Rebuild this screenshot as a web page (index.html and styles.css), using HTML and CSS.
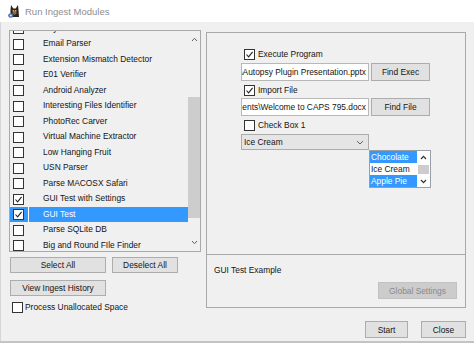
FILE: index.html
```html
<!DOCTYPE html>
<html>
<head>
<meta charset="utf-8">
<title>Run Ingest Modules</title>
<link rel="stylesheet" href="styles.css">
</head>
<body>
<div class="window">
  <div class="titlebar">
    <svg class="app-icon" viewBox="0 0 13 14" width="13" height="14">
      <path d="M2.5 13 L2.5 6 L3 1 L5.3 4.4 L7.7 4.4 L10 1 L10.5 6 L11 13 Z" fill="#2e2216"/>
      <path d="M5 6.5 L8 6.5 L8.6 9.5 L6.5 11 L4.4 9.5 Z" fill="#8a6a40"/>
      <circle cx="5.2" cy="6.8" r="0.7" fill="#e8d8b0"/>
      <circle cx="7.8" cy="6.8" r="0.7" fill="#e8d8b0"/>
      <ellipse cx="2.8" cy="11.5" rx="2.6" ry="2.2" fill="#3d6fb8"/>
      <ellipse cx="2.8" cy="11.5" rx="1.2" ry="1" fill="#cfe0f5"/>
    </svg>
    <span class="title">Run Ingest Modules</span>
  </div>
  <div class="body">
    <div class="main">
      <div class="left">
        <div class="modlist">
          <div class="rows">
            <div class="rows-inner">
              <div class="row"><span class="cbcell"><span class="cb"></span></span><span class="name">Keyword Search</span></div>
              <div class="row"><span class="cbcell"><span class="cb"></span></span><span class="name">Email Parser</span></div>
              <div class="row"><span class="cbcell"><span class="cb"></span></span><span class="name">Extension Mismatch Detector</span></div>
              <div class="row"><span class="cbcell"><span class="cb"></span></span><span class="name">E01 Verifier</span></div>
              <div class="row"><span class="cbcell"><span class="cb"></span></span><span class="name">Android Analyzer</span></div>
              <div class="row"><span class="cbcell"><span class="cb"></span></span><span class="name">Interesting Files Identifier</span></div>
              <div class="row"><span class="cbcell"><span class="cb"></span></span><span class="name">PhotoRec Carver</span></div>
              <div class="row"><span class="cbcell"><span class="cb"></span></span><span class="name">Virtual Machine Extractor</span></div>
              <div class="row"><span class="cbcell"><span class="cb"></span></span><span class="name">Low Hanging Fruit</span></div>
              <div class="row"><span class="cbcell"><span class="cb"></span></span><span class="name">USN Parser</span></div>
              <div class="row"><span class="cbcell"><span class="cb"></span></span><span class="name">Parse MACOSX Safari</span></div>
              <div class="row"><span class="cbcell"><span class="cb"><svg class="tick" viewBox="0 0 9 9"><path d="M1.5 4.5 L3.6 6.8 L7.6 1.8"/></svg></span></span><span class="name">GUI Test with Settings</span></div>
              <div class="row selected"><span class="cbcell"><span class="cb"><svg class="tick" viewBox="0 0 9 9"><path d="M1.5 4.5 L3.6 6.8 L7.6 1.8"/></svg></span></span><span class="name">GUI Test</span></div>
              <div class="row"><span class="cbcell"><span class="cb"></span></span><span class="name">Parse SQLite DB</span></div>
              <div class="row"><span class="cbcell"><span class="cb"></span></span><span class="name">Big and Round FIle Finder</span></div>
            </div>
          </div>
          <div class="vscroll">
            <span class="sarrow"><svg viewBox="0 0 7 5" width="7" height="5"><path d="M1 4 L3.5 1.3 L6 4" class="chev"/></svg></span>
            <span class="track"><span class="thumb"></span></span>
            <span class="sarrow"><svg viewBox="0 0 7 5" width="7" height="5"><path d="M1 1 L3.5 3.7 L6 1" class="chev"/></svg></span>
          </div>
        </div>
        <div class="btnrow">
          <button class="btn btn-select">Select All</button>
          <button class="btn btn-deselect">Deselect All</button>
        </div>
        <button class="btn btn-history">View Ingest History</button>
        <label class="check check-unalloc"><span class="cb"></span><span>Process Unallocated Space</span></label>
      </div>
      <div class="panel">
        <div class="settings">
          <label class="check srow first"><span class="cb"><svg class="tick" viewBox="0 0 9 9"><path d="M1.5 4.5 L3.6 6.8 L7.6 1.8"/></svg></span><span>Execute Program</span></label>
          <div class="field-row">
            <div class="field"><span>C:\Users\Student\Documents\Autopsy Plugin Presentation.pptx</span></div>
            <button class="btn btn-find">Find Exec</button>
          </div>
          <label class="check srow"><span class="cb"><svg class="tick" viewBox="0 0 9 9"><path d="M1.5 4.5 L3.6 6.8 L7.6 1.8"/></svg></span><span>Import File</span></label>
          <div class="field-row second">
            <div class="field"><span>C:\Users\Student\Documents\Welcome to CAPS 795.docx</span></div>
            <button class="btn btn-find">Find File</button>
          </div>
          <label class="check srow"><span class="cb"></span><span>Check Box 1</span></label>
          <div class="combo">
            <span>Ice Cream</span>
            <svg viewBox="0 0 8 5" width="8" height="5"><path d="M1 1 L4 4 L7 1" class="chev"/></svg>
          </div>
          <div class="listbox">
            <div class="items">
              <div class="item sel">Chocolate</div>
              <div class="item">Ice Cream</div>
              <div class="item sel">Apple Pie</div>
            </div>
            <div class="mini-scroll">
              <span class="marrow"><svg viewBox="0 0 7 5" width="7" height="5"><path d="M1 4 L3.5 1.3 L6 4" class="chev dark"/></svg></span>
              <span class="mtrack"><span class="mthumb"></span></span>
              <span class="marrow"><svg viewBox="0 0 7 5" width="7" height="5"><path d="M1 1 L3.5 3.7 L6 1" class="chev dark"/></svg></span>
            </div>
          </div>
        </div>
        <div class="desc">
          <div class="desc-text">GUI Test Example</div>
          <button class="btn btn-global" disabled>Global Settings</button>
        </div>
      </div>
    </div>
    <div class="footer">
      <button class="btn btn-start">Start</button>
      <button class="btn btn-close">Close</button>
    </div>
  </div>
</div>
</body>
</html>
```

FILE: styles.css
```css
* { box-sizing: border-box; }

html, body {
  margin: 0;
  padding: 0;
  background: #f0f0f0;
}

body {
  font-family: "Liberation Sans", Arial, sans-serif;
  font-size: 8.4px;
  color: #141414;
}

.window {
  width: 474px;
  height: 343px;
  background: #f0f0f0;
  display: flex;
  flex-direction: column;
  overflow: hidden;
  border-bottom: 2px solid #c4c4c4;
}

.titlebar {
  height: 22px;
  flex: none;
  background: #ffffff;
  display: flex;
  align-items: center;
  padding-left: 8px;
  gap: 4px;
}

.app-icon { display: block; }

.title {
  color: #8e8e8e;
  font-size: 9.5px;
}

.body {
  flex: 1;
  padding: 8px 8px 0 8px;
  border-left: 1px solid #d6d6d6;
}

.main {
  display: flex;
  gap: 5px;
  align-items: flex-start;
}

.left {
  width: 192px;
  flex: none;
  display: flex;
  flex-direction: column;
  align-items: flex-start;
}

/* module list */
.modlist {
  width: 192px;
  height: 222px;
  border: 1px solid #a9a9a9;
  background: #f0f0f0;
  display: flex;
}

.rows {
  flex: 1;
  overflow: hidden;
}

.rows-inner { margin-top: -10.25px; }

.row {
  height: 15.5px;
  display: flex;
  align-items: center;
}

.cbcell {
  width: 18px;
  height: 100%;
  flex: none;
  display: flex;
  align-items: center;
  padding-left: 3px;
}

.name {
  flex: 1;
  height: 100%;
  padding-left: 15px;
  line-height: 15.5px;
  white-space: nowrap;
  overflow: hidden;
}

.row.selected {
  background: #3399ff;
  color: #ffffff;
}

.row.selected .name { box-shadow: inset 1px 0 #ffffff; }

.cb {
  width: 11px;
  height: 11px;
  flex: none;
  border: 1px solid #333333;
  background: #ffffff;
  display: inline-flex;
  align-items: center;
  justify-content: center;
}

.tick {
  width: 9px;
  height: 9px;
  fill: none;
  stroke: #222222;
  stroke-width: 1.1;
}

.vscroll {
  width: 12px;
  flex: none;
  display: flex;
  flex-direction: column;
  background: #f0f0f0;
}

.sarrow {
  height: 17px;
  flex: none;
  display: flex;
  align-items: center;
  justify-content: center;
}

.chev {
  fill: none;
  stroke: #606060;
  stroke-width: 1;
}

.chev.dark { stroke: #333333; stroke-width: 1.2; }

.track {
  flex: 1;
  display: flex;
  flex-direction: column;
}

.thumb {
  margin-top: 49px;
  height: 121px;
  background: #cdcdcd;
}

/* buttons */
.btn {
  font: inherit;
  color: #141414;
  height: 16px;
  padding: 0;
  border: 1px solid #adadad;
  background: #e1e1e1;
  display: flex;
  align-items: center;
  justify-content: center;
  white-space: nowrap;
}

.btnrow {
  display: flex;
  gap: 6px;
  margin: 5px 0 0 1px;
}

.btn-select { width: 96px; }
.btn-deselect { width: 66px; }

.btn-history {
  width: 96px;
  margin: 7px 0 0 1px;
}

.check {
  display: flex;
  align-items: center;
  gap: 3px;
  height: 12px;
}

.check-unalloc {
  margin: 5px 0 0 3px;
  gap: 2px;
}

/* right panel */
.panel {
  width: 260px;
  height: 276px;
  margin-top: 2px;
  border: 1px solid #a9a9a9;
  display: flex;
  flex-direction: column;
}

.settings {
  height: 222px;
  flex: none;
  border-bottom: 1px solid #a9a9a9;
  padding: 0 0 0 34px;
}

.srow {
  padding-left: 3px;
  margin-top: 3px;
}

.srow.first { margin-top: 15px; }

.field-row {
  display: flex;
  gap: 2px;
  height: 18px;
  margin-top: 3px;
}

.field-row.second { margin-top: 2px; }

.field {
  width: 128px;
  height: 100%;
  background: #ffffff;
  border: 1px solid #b8b8b8;
  display: flex;
  justify-content: flex-end;
  align-items: center;
  overflow: hidden;
  white-space: nowrap;
  padding-right: 2px;
}

.field span { flex: none; }

.btn-find {
  width: 59px;
  height: 18px;
}

.combo {
  width: 128px;
  height: 16px;
  margin-top: 3px;
  background: #e5e5e5;
  border: 1px solid #acacac;
  display: flex;
  align-items: center;
  justify-content: space-between;
  padding: 0 4px 0 2px;
}

.listbox {
  width: 62px;
  height: 38px;
  margin-left: 128px;
  border: 1px solid #9a9ea6;
  background: #ffffff;
  display: flex;
}

.items { flex: 1; }

.item {
  height: 12px;
  line-height: 12px;
  padding-left: 1px;
  white-space: nowrap;
  overflow: hidden;
}

.item.sel {
  background: #3399ff;
  color: #ffffff;
}

.mini-scroll {
  width: 13px;
  flex: none;
  display: flex;
  flex-direction: column;
  background: #ffffff;
  padding: 0 1px;
}

.marrow {
  height: 12px;
  display: flex;
  align-items: center;
  justify-content: center;
}

.mtrack {
  flex: 1;
  display: flex;
  flex-direction: column;
  justify-content: center;
}

.mthumb {
  height: 9px;
  background: #cdcdcd;
}

.desc {
  flex: 1;
  display: flex;
  flex-direction: column;
  padding: 9px 8px 0 7px;
}

.desc-text {
  height: 12px;
  line-height: 12px;
}

.btn-global {
  align-self: flex-end;
  width: 79px;
  height: 17px;
  margin-top: 6px;
  background: #cccccc;
  border-color: #c2c2c2;
  color: #8a8a8a;
}

/* footer */
.footer {
  display: flex;
  justify-content: flex-end;
  gap: 13px;
  margin-top: 8px;
}

.btn-start { width: 43px; height: 17px; }
.btn-close { width: 45px; height: 17px; }
```
